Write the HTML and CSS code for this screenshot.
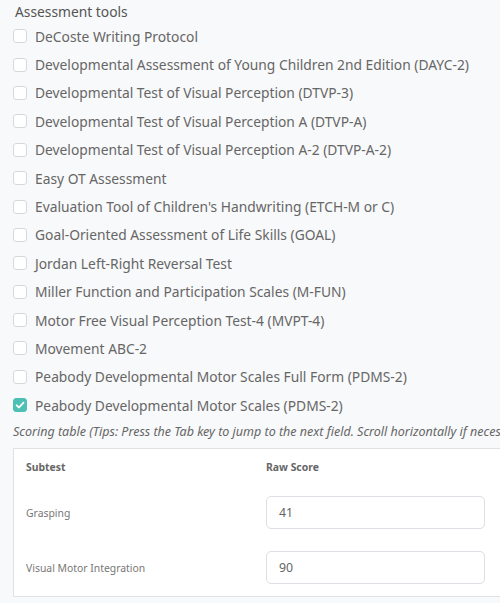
FILE: index.html
```html
<!DOCTYPE html>
<html>
<head>
<meta charset="utf-8">
<link rel="stylesheet" href="styles.css">
</head>
<body>
<div class="page">
  <div class="heading">Assessment tools</div>
  <ul class="tools">
    <li class="tool"><span class="box"></span><span class="label">DeCoste Writing Protocol</span></li>
    <li class="tool"><span class="box"></span><span class="label">Developmental Assessment of Young Children 2nd Edition (DAYC-2)</span></li>
    <li class="tool"><span class="box"></span><span class="label">Developmental Test of Visual Perception (DTVP-3)</span></li>
    <li class="tool"><span class="box"></span><span class="label">Developmental Test of Visual Perception A (DTVP-A)</span></li>
    <li class="tool"><span class="box"></span><span class="label">Developmental Test of Visual Perception A-2 (DTVP-A-2)</span></li>
    <li class="tool"><span class="box"></span><span class="label">Easy OT Assessment</span></li>
    <li class="tool"><span class="box"></span><span class="label">Evaluation Tool of Children's Handwriting (ETCH-M or C)</span></li>
    <li class="tool"><span class="box"></span><span class="label">Goal-Oriented Assessment of Life Skills (GOAL)</span></li>
    <li class="tool"><span class="box"></span><span class="label">Jordan Left-Right Reversal Test</span></li>
    <li class="tool"><span class="box"></span><span class="label">Miller Function and Participation Scales (M-FUN)</span></li>
    <li class="tool"><span class="box"></span><span class="label">Motor Free Visual Perception Test-4 (MVPT-4)</span></li>
    <li class="tool"><span class="box"></span><span class="label">Movement ABC-2</span></li>
    <li class="tool"><span class="box"></span><span class="label">Peabody Developmental Motor Scales Full Form (PDMS-2)</span></li>
    <li class="tool"><span class="box checked"><svg viewBox="0 0 14 14" width="14" height="14"><path d="M3.6 7.3 L6 9.5 L10.5 4.7" fill="none" stroke="#fff" stroke-width="1.8" stroke-linecap="round" stroke-linejoin="round"/></svg></span><span class="label">Peabody Developmental Motor Scales (PDMS-2)</span></li>
  </ul>
  <div class="scroll">
    <div class="tip">Scoring table (Tips: Press the Tab key to jump to the next field. Scroll horizontally if necessary.)</div>
    <div class="card">
      <div class="row head">
        <div class="c1">Subtest</div>
        <div class="c2">Raw Score</div>
      </div>
      <div class="row">
        <div class="c1">Grasping</div>
        <div class="c2"><div class="input">41</div></div>
      </div>
      <div class="row">
        <div class="c1">Visual Motor Integration</div>
        <div class="c2"><div class="input">90</div></div>
      </div>
    </div>
  </div>
</div>
</body>
</html>
```
FILE: styles.css
```css
html, body {
  margin: 0;
  padding: 0;
  background: #f8f9fa;
  overflow: hidden;
}
body {
  font-family: "Noto Sans", sans-serif;
  color: #666;
}
.page {
  padding: 2px 0 0 13px;
}
.heading {
  font-size: 13.8px;
  line-height: 20px;
  color: #555;
  padding-left: 2px;
}
.tools {
  list-style: none;
  margin: 0;
  padding: 0;
}
.tool {
  display: flex;
  align-items: center;
  height: 28.4px;
  font-size: 13.8px;
  color: #666;
  white-space: nowrap;
}
.box {
  box-sizing: border-box;
  width: 14px;
  height: 14px;
  border: 1px solid #d6d9dc;
  border-radius: 3px;
  background: #fff;
  margin-right: 8px;
  flex: none;
  display: flex;
}
.box.checked {
  background: #4dbfb5;
  border-color: #4dbfb5;
}
.box.checked svg {
  margin: -1px;
}
.scroll {
  overflow: hidden;
}
.tip {
  margin-top: 4px;
  font-size: 12.5px;
  font-style: italic;
  color: #666;
  white-space: nowrap;
  line-height: 18px;
}
.card {
  margin-top: 7px;
  background: #fff;
  border: 1px solid #dfe2e5;
  box-sizing: border-box;
  height: 149px;
  width: 540px;
}
.row {
  display: flex;
  align-items: center;
  height: 55px;
  font-size: 10.4px;
  color: #777;
}
.row.head {
  height: 36px;
  font-weight: 700;
  color: #666;
}
.c1 {
  width: 252px;
  padding-left: 12px;
  box-sizing: border-box;
  flex: none;
}
.c2 {
  width: 219px;
  flex: none;
}
.input {
  box-sizing: border-box;
  width: 219px;
  height: 33px;
  border: 1px solid #dcdfe3;
  border-radius: 5px;
  padding: 0 12px;
  display: flex;
  align-items: center;
  font-size: 12.3px;
  color: #666;
  background: #fff;
}
```
